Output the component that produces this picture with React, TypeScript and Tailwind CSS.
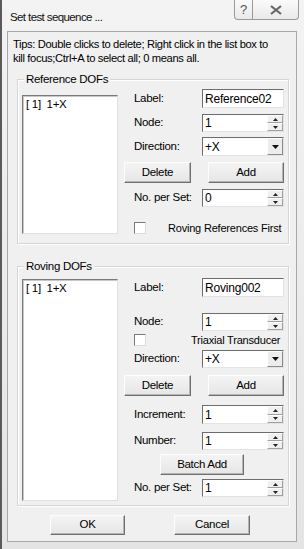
import React from 'react';

const font = { fontFamily: '"Liberation Sans", Arial, sans-serif' };

function SpinArrows() {
  return (
    <div className="flex flex-col w-[16px] h-full shrink-0">
      <div className="flex-1 flex items-center justify-center bg-[#f0f0f0] border border-t-white border-l-white border-r-[#a0a0a0] border-b-[#a0a0a0]">
        <svg width="5" height="3" viewBox="0 0 5 3"><path d="M2.5 0 L5 3 L0 3 Z" fill="#222" /></svg>
      </div>
      <div className="flex-1 flex items-center justify-center bg-[#f0f0f0] border border-t-white border-l-white border-r-[#a0a0a0] border-b-[#a0a0a0]">
        <svg width="5" height="3" viewBox="0 0 5 3"><path d="M0 0 L5 0 L2.5 3 Z" fill="#222" /></svg>
      </div>
    </div>
  );
}

function Field({ value, kind = 'text', h = 18 }: { value: string; kind?: 'text' | 'spin' | 'combo'; h?: number }) {
  return (
    <div
      className="w-[82px] shrink-0 flex bg-white border border-t-[#6d6d6d] border-l-[#6d6d6d] border-r-[#e3e3e3] border-b-[#e3e3e3]"
      style={{ height: h }}
    >
      <div className="flex-1 flex items-center pl-[2px] text-[12px] tracking-[-0.2px] text-black leading-none whitespace-nowrap">{value}</div>
      {kind === 'spin' && <SpinArrows />}
      {kind === 'combo' && (
        <div className="w-[16px] h-full shrink-0 flex items-center justify-center bg-[#ededed] border border-t-white border-l-white border-r-[#8a8a8a] border-b-[#8a8a8a]">
          <svg width="7" height="4" viewBox="0 0 7 4"><path d="M0 0 L7 0 L3.5 4 Z" fill="#111" /></svg>
        </div>
      )}
    </div>
  );
}

function Btn({ label, w, h = 21 }: { label: string; w: number; h?: number }) {
  return (
    <div
      className="shrink-0 flex items-center justify-center text-[11.5px] text-black whitespace-nowrap bg-gradient-to-b from-[#f4f4f4] to-[#e6e6e6] border border-t-[#fdfdfd] border-l-[#fdfdfd] border-r-[#6f6f6f] border-b-[#6f6f6f] shadow-[inset_-1px_-1px_0_#b5b5b5]"
      style={{ width: w, height: h }}
    >
      {label}
    </div>
  );
}

function Check() {
  return <div className="w-[12px] h-[12px] shrink-0 bg-white border border-t-[#7a7a7a] border-l-[#7a7a7a] border-r-[#dcdcdc] border-b-[#dcdcdc]" />;
}

function Row({ label, children, mt }: { label: string; children: React.ReactNode; mt: number }) {
  return (
    <div className="flex items-center" style={{ marginTop: mt }}>
      <div className="w-[78px] shrink-0 pl-[10px] text-[11.5px] text-black whitespace-nowrap">{label}</div>
      {children}
    </div>
  );
}

function Group({ title, h, children }: { title: string; h: number; children: React.ReactNode }) {
  return (
    <div className="relative ml-[9px] w-[272px] border border-[#d5d5d5] shadow-[inset_1px_1px_0_#fff,1px_1px_0_#fff]" style={{ height: h }}>
      <div className="absolute -top-[8px] left-[6px] px-[2px] bg-[#f0f0f0] text-[11.5px] leading-[14px] text-black whitespace-nowrap">{title}</div>
      {children}
    </div>
  );
}

function ListBox({ h }: { h: number }) {
  return (
    <div
      className="w-[96px] shrink-0 bg-white border border-t-[#7a7a7a] border-l-[#7a7a7a] border-r-[#e0e0e0] border-b-[#e0e0e0] shadow-[inset_1px_1px_0_#c8c8c8] text-[11.5px] text-black pl-[3px] pt-[1px] leading-[14px] whitespace-pre"
      style={{ height: h }}
    >
      {'[ 1]  1+X'}
    </div>
  );
}

export default function App() {
  return (
    <div
      className="w-[304px] h-[549px] bg-gradient-to-b from-[#f3f3f3] to-[#e4e4e4] border-l-2 border-[#5a5a5a] overflow-hidden tracking-[-0.3px]"
      style={font}
    >
      {/* title bar */}
      <div className="h-[31px] flex items-start justify-between">
        <div className="pt-[9px] pl-[8px] text-[11.5px] tracking-[-0.6px] text-[#111] leading-[16px] whitespace-nowrap">Set test sequence ...</div>
        <div className="flex mr-[5px]">
          <div className="w-[19px] h-[20px] flex items-center justify-center border border-t-0 border-[#9a9a9a] rounded-bl-[4px] bg-gradient-to-b from-[#fafafa] to-[#e9e9e9] text-[13px] text-[#555] leading-none">?</div>
          <div className="w-[46px] h-[20px] flex items-center justify-center border border-t-0 border-l-0 border-[#9a9a9a] rounded-br-[4px] bg-gradient-to-b from-[#fafafa] to-[#e9e9e9]">
            <svg width="12" height="10" viewBox="0 0 12 10"><path d="M1 1 L11 9 M11 1 L1 9" stroke="#666" strokeWidth="2.2" fill="none" /></svg>
          </div>
        </div>
      </div>

      {/* client area */}
      <div className="ml-[5px] w-[290px] h-[511px] bg-[#f0f0f0] border border-[#a8a8a8] flex flex-col">
        <div className="pl-[5px] pt-[5px] text-[11.2px] tracking-[-0.36px] leading-[14px] text-black whitespace-nowrap">
          Tips: Double clicks to delete; Right click in the list box to
          <br />
          kill focus;Ctrl+A to select all; 0 means all.
        </div>

        <div className="mt-[14px]">
          <Group title="Reference DOFs" h={165}>
            <div className="flex">
              <div className="ml-[4px] mt-[15px]">
                <ListBox h={139} />
              </div>
              <div className="ml-[6px] flex flex-col">
                <Row label="Label:" mt={9}>
                  <Field value="Reference02" h={19} />
                </Row>
                <Row label="Node:" mt={6}>
                  <Field value="1" kind="spin" />
                </Row>
                <Row label="Direction:" mt={5}>
                  <Field value="+X" kind="combo" h={19} />
                </Row>
                <div className="flex gap-[17px] mt-[6px]">
                  <Btn label="Delete" w={67} h={21} />
                  <Btn label="Add" w={76} h={21} />
                </div>
                <Row label="No. per Set:" mt={6}>
                  <Field value="0" kind="spin" />
                </Row>
                <div className="flex items-center mt-[13px]">
                  <div className="ml-[10px]"><Check /></div>
                  <div className="ml-[22px] text-[11px] tracking-[-0.2px] text-black whitespace-nowrap">Roving References First</div>
                </div>
              </div>
            </div>
          </Group>
        </div>

        <div className="mt-[22px]">
          <Group title="Roving DOFs" h={240}>
            <div className="flex">
              <div className="ml-[4px] mt-[12px]">
                <ListBox h={222} />
              </div>
              <div className="ml-[6px] flex flex-col">
                <Row label="Label:" mt={11}>
                  <Field value="Roving002" h={19} />
                </Row>
                <Row label="Node:" mt={16}>
                  <Field value="1" kind="spin" />
                </Row>
                <div className="flex items-center h-[14px] mt-[2px]">
                  <div className="ml-[10px]"><Check /></div>
                  <div className="ml-[45px] text-[11px] tracking-[-0.2px] text-black whitespace-nowrap">Triaxial Transducer</div>
                </div>
                <Row label="Direction:" mt={3}>
                  <Field value="+X" kind="combo" />
                </Row>
                <div className="flex gap-[17px] mt-[7px]">
                  <Btn label="Delete" w={67} h={21} />
                  <Btn label="Add" w={76} h={21} />
                </div>
                <Row label="Increment:" mt={9}>
                  <Field value="1" kind="spin" h={19} />
                </Row>
                <Row label="Number:" mt={8}>
                  <Field value="1" kind="spin" />
                </Row>
                <div className="mt-[4px] ml-[36px]">
                  <Btn label="Batch Add" w={84} h={21} />
                </div>
                <Row label="No. per Set:" mt={4}>
                  <Field value="1" kind="spin" />
                </Row>
              </div>
            </div>
          </Group>
        </div>

        <div className="flex mt-[9px] ml-[42px] gap-[49px]">
          <Btn label="OK" w={75} h={20} />
          <Btn label="Cancel" w={76} h={20} />
        </div>
      </div>
    </div>
  );
}
